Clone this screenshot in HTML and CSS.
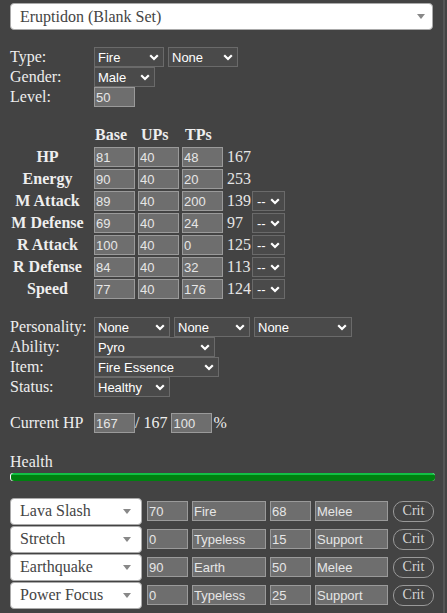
FILE: index.html
```html
<!DOCTYPE html>
<html lang="en">
	<head>
		<meta charset="UTF-8" />
		<title>Set editor</title>
		<link rel="stylesheet" href="styles.css">
	</head>
	<body>
		<div class="panel">
			<div class="set-select">
				<span>Eruptidon (Blank Set)</span>
				<span class="set-arrow"></span>
			</div>

			<div class="info">
				<div class="info-row">
					<label>Type:</label>
					<select class="sel w70"><option>Fire</option></select>
					<select class="sel w70"><option>None</option></select>
				</div>
				<div class="info-row">
					<label>Gender:</label>
					<select class="sel w61"><option>Male</option></select>
				</div>
				<div class="info-row">
					<label>Level:</label>
					<input class="num" value="50" />
				</div>
			</div>

			<!-- Stats -->
			<div class="stats">
				<span></span>
				<span class="head">Base</span>
				<span class="head">UPs</span>
				<span class="head">TPs</span>
				<span></span>
				<span></span>

				<span class="stat-name">HP</span>
				<input class="num" value="81" />
				<input class="num" value="40" />
				<input class="num" value="48" />
				<span class="total">167</span>
				<span></span>

				<span class="stat-name">Energy</span>
				<input class="num" value="90" />
				<input class="num" value="40" />
				<input class="num" value="20" />
				<span class="total">253</span>
				<span></span>

				<span class="stat-name">M Attack</span>
				<input class="num" value="89" />
				<input class="num" value="40" />
				<input class="num" value="200" />
				<span class="total">139</span>
				<select class="sel boost"><option>--</option></select>

				<span class="stat-name">M Defense</span>
				<input class="num" value="69" />
				<input class="num" value="40" />
				<input class="num" value="24" />
				<span class="total">97</span>
				<select class="sel boost"><option>--</option></select>

				<span class="stat-name">R Attack</span>
				<input class="num" value="100" />
				<input class="num" value="40" />
				<input class="num" value="0" />
				<span class="total">125</span>
				<select class="sel boost"><option>--</option></select>

				<span class="stat-name">R Defense</span>
				<input class="num" value="84" />
				<input class="num" value="40" />
				<input class="num" value="32" />
				<span class="total">113</span>
				<select class="sel boost"><option>--</option></select>

				<span class="stat-name">Speed</span>
				<input class="num" value="77" />
				<input class="num" value="40" />
				<input class="num" value="176" />
				<span class="total">124</span>
				<select class="sel boost"><option>--</option></select>
			</div>

			<div class="info extra">
				<div class="info-row">
					<label>Personality:</label>
					<select class="sel w76"><option>None</option></select>
					<select class="sel w76"><option>None</option></select>
					<select class="sel w98"><option>None</option></select>
				</div>
				<div class="info-row">
					<label>Ability:</label>
					<select class="sel w121"><option>Pyro</option></select>
				</div>
				<div class="info-row">
					<label>Item:</label>
					<select class="sel w125"><option>Fire Essence</option></select>
				</div>
				<div class="info-row">
					<label>Status:</label>
					<select class="sel w76"><option>Healthy</option></select>
				</div>
			</div>

			<div class="info-row current-hp">
				<label>Current HP</label>
				<input class="num" value="167" />
				<span class="slash">/ 167</span>
				<input class="num" value="100" />
				<span class="pct">%</span>
			</div>

			<div class="health">
				<div>Health</div>
				<div class="health-bar"><div class="health-fill" style="width: 100%"></div></div>
			</div>

			<!-- Moves -->
			<div class="moves">
				<div class="move">
					<div class="move-select"><span>Lava Slash</span><span class="move-arrow"></span></div>
					<input class="num bp" value="70" />
					<input class="num mtype" value="Fire" />
					<input class="num bp" value="68" />
					<input class="num mcat" value="Melee" />
					<button class="crit">Crit</button>
				</div>
				<div class="move">
					<div class="move-select"><span>Stretch</span><span class="move-arrow"></span></div>
					<input class="num bp" value="0" />
					<input class="num mtype" value="Typeless" />
					<input class="num bp" value="15" />
					<input class="num mcat" value="Support" />
					<button class="crit">Crit</button>
				</div>
				<div class="move">
					<div class="move-select"><span>Earthquake</span><span class="move-arrow"></span></div>
					<input class="num bp" value="90" />
					<input class="num mtype" value="Earth" />
					<input class="num bp" value="50" />
					<input class="num mcat" value="Melee" />
					<button class="crit">Crit</button>
				</div>
				<div class="move">
					<div class="move-select"><span>Power Focus</span><span class="move-arrow"></span></div>
					<input class="num bp" value="0" />
					<input class="num mtype" value="Typeless" />
					<input class="num bp" value="25" />
					<input class="num mcat" value="Support" />
					<button class="crit">Crit</button>
				</div>
			</div>
		</div>
	</body>
</html>
```

FILE: styles.css
```css
body {
	margin: 0;
	background: #434343;
	font-family: "Liberation Serif", serif;
	font-size: 16px;
	color: #eeeeee;
}

.panel {
	width: 445px;
	height: 613px;
	box-sizing: border-box;
	border-right: 2px solid #555555;
	padding: 3px 0 0 10px;
	overflow: hidden;
}

/* gros select du set */
.set-select {
	height: 27px;
	box-sizing: border-box;
	background: #ffffff;
	border: 1px solid #aaaaaa;
	border-radius: 4px;
	color: #444444;
	display: flex;
	align-items: center;
	justify-content: space-between;
	padding: 0 7px 0 9px;
	width: 423px;
}

.set-arrow {
	width: 0;
	height: 0;
	border-left: 4px solid transparent;
	border-right: 4px solid transparent;
	border-top: 5px solid #888888;
}

.info {
	margin-top: 17px;
}

.info-row {
	display: flex;
	align-items: center;
	height: 20px;
	gap: 4px;
}

.info-row label {
	width: 80px;
	flex: none;
	line-height: 20px;
}

.sel {
	appearance: none;
	-webkit-appearance: none;
	height: 20px;
	box-sizing: border-box;
	background-color: #4a4a4a;
	background-image: url("data:image/svg+xml,%3Csvg xmlns='http://www.w3.org/2000/svg' width='10' height='7'%3E%3Cpath d='M1.2 1.2 L5 5 L8.8 1.2' fill='none' stroke='white' stroke-width='2.2'/%3E%3C/svg%3E");
	background-repeat: no-repeat;
	background-position: right 4px center;
	color: #ffffff;
	border: 1px solid #6a6a6a;
	border-radius: 0;
	font-family: "Liberation Sans", sans-serif;
	font-size: 13px;
	padding: 0 0 0 3px;
	margin: 0;
	flex: none;
}

.w61 { width: 61px; }
.w70 { width: 70px; }
.w76 { width: 76px; }
.w98 { width: 98px; }
.w121 { width: 121px; }
.w125 { width: 125px; }

.num {
	width: 41px;
	height: 20px;
	box-sizing: border-box;
	background: #6e6e6e;
	color: #e6e6e6;
	border: 1px solid #9a9a9a;
	font-family: "Liberation Sans", sans-serif;
	font-size: 13px;
	padding: 0 1px;
	margin: 0;
	flex: none;
}

/* tableau des stats */
.stats {
	margin-top: 18px;
	display: grid;
	grid-template-columns: 81px 41px 41px 41px 23px 33px;
	grid-auto-rows: 20px;
	column-gap: 3px;
	row-gap: 2px;
	align-items: center;
}

.head {
	font-weight: bold;
	padding-left: 1px;
	line-height: 20px;
}

.head:nth-child(3),
.head:nth-child(4) {
	padding-left: 3px;
}

.stat-name {
	font-weight: bold;
	text-align: center;
	line-height: 20px;
	padding-right: 6px;
}

.total {
	color: #e6e6e6;
	line-height: 20px;
	padding-left: 1px;
}

.boost {
	width: 33px;
	padding-left: 4px;
}

.extra {
	margin-top: 18px;
}

.current-hp {
	margin-top: 16px;
}

.slash {
	margin-left: -4px;
}

.pct {
	margin-left: -3px;
}

.health {
	margin-top: 20px;
}

.health-bar {
	margin-top: 2px;
	height: 8px;
	background: #ffffff;
	border-radius: 3px;
	overflow: hidden;
	width: 425px;
}

.health-fill {
	height: 100%;
	border-radius: 3px;
	margin-left: 1px;
	background: linear-gradient(#11c144 0 30%, #008010 30%);
}

.moves {
	margin-top: 16px;
}

.move {
	display: flex;
	align-items: center;
	gap: 4px;
	height: 28px;
}

.move-select {
	width: 132px;
	height: 27px;
	box-sizing: border-box;
	background: #ffffff;
	border: 1px solid #aaaaaa;
	border-radius: 4px;
	color: #444444;
	display: flex;
	align-items: center;
	justify-content: space-between;
	padding: 0 10px 0 9px;
	margin-right: 1px;
	flex: none;
}

.move-arrow {
	width: 0;
	height: 0;
	border-left: 4px solid transparent;
	border-right: 4px solid transparent;
	border-top: 5px solid #888888;
}

.mtype {
	width: 74px;
}

.mcat {
	width: 73px;
}

.crit {
	width: 41px;
	height: 21px;
	margin-left: 1px;
	background: #444444;
	color: #d6d6d6;
	border: 1px solid #999999;
	border-radius: 10px;
	font-family: "Liberation Serif", serif;
	font-size: 14px;
	padding: 0;
}
```
